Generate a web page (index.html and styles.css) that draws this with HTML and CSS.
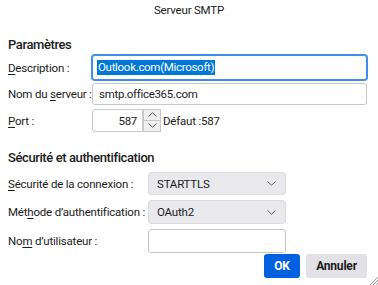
FILE: index.html
```html
<!DOCTYPE html>
<html lang="fr">
<head>
    <meta charset="UTF-8">
    <meta name="viewport" content="width=device-width, initial-scale=1.0">
    <title>Serveur SMTP</title>
    <link rel="stylesheet" href="styles.css">
</head>
<body>
    <!-- Barre de titre de la boîte de dialogue -->
    <div class="titlebar">Serveur SMTP</div>

    <div class="dialog">
        <!-- Paramètres du serveur -->
        <h2 class="section-title">Paramètres</h2>
        <div class="form-grid settings">
            <label class="label"><u>D</u>escription :</label>
            <div class="field field-focus"><span class="selected">Outlook.com(Microsoft)</span></div>

            <label class="label">Nom du <u>s</u>erveur :</label>
            <div class="field">smtp.office365.com</div>

            <label class="label port-label"><u>P</u>ort :</label>
            <div class="port-row">
                <div class="field port">587</div>
                <div class="spinner">
                    <button class="spin">
                        <svg width="9" height="5" viewBox="0 0 9 5"><path d="M0.5 4.5 L4.5 0.8 L8.5 4.5" fill="none" stroke="#555" stroke-width="1"/></svg>
                    </button>
                    <button class="spin">
                        <svg width="9" height="5" viewBox="0 0 9 5"><path d="M0.5 0.5 L4.5 4.2 L8.5 0.5" fill="none" stroke="#555" stroke-width="1"/></svg>
                    </button>
                </div>
                <span class="default">Défaut :587</span>
            </div>
        </div>

        <!-- Sécurité -->
        <h2 class="section-title security-title">Sécurité et authentification</h2>
        <div class="form-grid security">
            <label class="label"><u>S</u>écurité de la connexion :</label>
            <div class="select">STARTTLS<svg class="chevron" width="9" height="5" viewBox="0 0 9 5"><path d="M0.5 0.5 L4.5 4.2 L8.5 0.5" fill="none" stroke="#666" stroke-width="1"/></svg></div>

            <label class="label">Mét<u>h</u>ode d’authentification :</label>
            <div class="select">OAuth2<svg class="chevron" width="9" height="5" viewBox="0 0 9 5"><path d="M0.5 0.5 L4.5 4.2 L8.5 0.5" fill="none" stroke="#666" stroke-width="1"/></svg></div>

            <label class="label">No<u>m</u> d’utilisateur :</label>
            <div class="field user"></div>
        </div>

        <!-- Boutons -->
        <div class="actions">
            <button class="btn btn-primary">OK</button>
            <button class="btn">Annuler</button>
        </div>
    </div>

    <!-- Poignée de redimensionnement -->
    <svg class="grip" width="10" height="10" viewBox="0 0 10 10">
        <path d="M10 2 L2 10 M10 5 L5 10 M10 8 L8 10" stroke="#999" stroke-width="1"/>
    </svg>
</body>
</html>
```

FILE: styles.css
```css
/* Base de la page */
body {
    margin: 0;
    width: 378px;
    height: 285px;
    background: #fff;
    color: #1b1b1b;
    font-family: Roboto, "Liberation Sans", sans-serif;
    font-size: 11.5px;
    letter-spacing: -0.2px;
    position: relative;
    overflow: hidden;
}
/* Titre de la fenêtre */
.titlebar {
    height: 20px;
    line-height: 20px;
    text-align: center;
    color: #222;
}
.dialog {
    padding: 0 11px 0 8px;
}
/* Titres des sections */
.section-title {
    margin: 17px 0 2px 0;
    font-size: 13px;
    font-weight: 500;
    line-height: 16px;
    letter-spacing: -0.4px;
    color: #1b1b1b;
}
.security-title {
    margin-top: 19px;
    margin-bottom: 6px;
}
/* Grille label / champ */
.form-grid {
    display: grid;
    align-items: center;
}
.settings {
    grid-template-columns: 84px 1fr;
    grid-template-rows: 25px 22px 23px;
    row-gap: 3px;
}
.security {
    grid-template-columns: 140px 138px;
    grid-template-rows: 23px 24px 24px;
    row-gap: 5px;
}
.label {
    white-space: nowrap;
}
.label u {
    text-underline-offset: 2px;
}
.port-label {
    margin-top: 3px;
}
/* Champs de saisie */
.field {
    height: 100%;
    box-sizing: border-box;
    border: 1px solid #c8c8c8;
    border-radius: 3px;
    padding: 0 6px;
    display: flex;
    align-items: center;
    background: #fff;
    letter-spacing: -0.3px;
}
.field-focus {
    border: 1px solid #3d8ef0;
    box-shadow: 0 0 0 1px #3d8ef0;
    padding-left: 4px;
}
.selected {
    background: #0078d7;
    color: #fff;
    padding: 0 1px;
    line-height: 15px;
}
.port-row {
    display: flex;
    align-items: center;
    height: 23px;
    margin-top: 2px;
}
.port {
    width: 51px;
    justify-content: flex-end;
    padding-right: 5px;
    border-radius: 3px 0 0 3px;
}
.spinner {
    display: flex;
    flex-direction: column;
    height: 23px;
}
.spin {
    width: 18px;
    height: 11.5px;
    padding: 0;
    margin: 0;
    border: 1px solid #c8c8c8;
    background: #f0f0f0;
    display: flex;
    align-items: center;
    justify-content: center;
}
.spin + .spin {
    border-top: none;
}
.default {
    margin-left: 2px;
}
/* Listes déroulantes */
.select {
    height: 100%;
    box-sizing: border-box;
    background: #e9e9ed;
    border: 1px solid #dcdcdc;
    border-radius: 3px;
    padding: 0 9px 0 8px;
    display: flex;
    align-items: center;
    justify-content: space-between;
}
.user {
    border-color: #c4c4c4;
}
/* Boutons */
.actions {
    display: flex;
    justify-content: flex-end;
    gap: 6px;
    margin-top: 1px;
}
.btn {
    height: 24px;
    width: 61px;
    padding: 0;
    border: none;
    border-radius: 3px;
    background: #e2e2e6;
    color: #1b1b1b;
    font-family: inherit;
    font-size: 12px;
    font-weight: 700;
    letter-spacing: -0.2px;
}
.btn-primary {
    width: 36px;
    background: #0061e0;
    color: #fff;
}
.grip {
    position: absolute;
    right: 0;
    bottom: 0;
}
```
